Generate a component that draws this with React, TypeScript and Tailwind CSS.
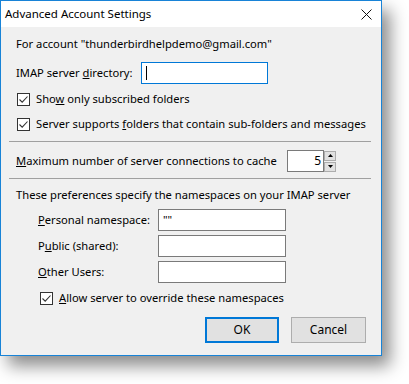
import React from "react";

const font = { fontFamily: '"Noto Sans", "Open Sans", sans-serif' };

function Check({ className = "" }: { className?: string }) {
  return (
    <span className={`flex h-[13px] w-[13px] shrink-0 items-center justify-center border border-[#333] bg-white ${className}`}>
      <svg width="11" height="11" viewBox="0 0 11 11">
        <path d="M1.5 5.5 L4.2 8.2 L9.5 2.5" fill="none" stroke="#333" strokeWidth="1.1" />
      </svg>
    </span>
  );
}

function Field({ value = "", className = "" }: { value?: string; className?: string }) {
  return (
    <div className={`flex h-[22px] shrink-0 items-center border border-[#7a7a7a] bg-white px-[4px] ${className}`}>
      <span className="leading-none">{value}</span>
    </div>
  );
}

export default function App() {
  return (
    <div className="h-[384px] w-[409px] overflow-hidden whitespace-nowrap bg-white text-[11.2px] text-black" style={font}>
      <div className="flex h-[356px] w-[382px] flex-col border border-[#1883d7] bg-[#f0f0f0] shadow-[8px_10px_16px_rgba(0,0,0,0.45)]">
        <div className="flex h-[26px] items-center justify-between bg-white pl-[4px] pr-[9px] text-[11.5px]">
          <span>Advanced Account Settings</span>
          <svg width="11" height="11" viewBox="0 0 11 11">
            <path d="M0.5 0.5 L10.5 10.5 M10.5 0.5 L0.5 10.5" stroke="#111" strokeWidth="1" />
          </svg>
        </div>

        <div className="flex flex-col">
          <div className="ml-[15px] mt-[9px] flex h-[16px] items-center">For account "thunderbirdhelpdemo@gmail.com"</div>

          <div className="ml-[15px] mt-[10px] flex h-[22px] items-center">
            <span className="w-[125px] shrink-0">
              IMAP server <u>d</u>irectory:
            </span>
            <div className="flex h-[22px] w-[127px] shrink-0 items-center border border-[#0078d7] bg-white pl-[4px]">
              <span className="h-[14px] w-[1px] bg-black" />
            </div>
          </div>

          <div className="ml-[16px] mt-[7px] flex h-[16px] items-center gap-[6px]">
            <Check />
            <span>
              Sho<u>w</u> only subscribed folders
            </span>
          </div>

          <div className="ml-[16px] mt-[9px] flex h-[16px] items-center gap-[6px]">
            <Check />
            <span>
              Server supports <u>f</u>olders that contain sub-folders and messages
            </span>
          </div>

          <div className="ml-[8px] mt-[9px] h-[1px] w-[362px] bg-[#a0a0a0]" />

          <div className="ml-[15px] mt-[8px] flex h-[22px] items-center">
            <span className="w-[271px] shrink-0">
              <u>M</u>aximum number of server connections to cache
            </span>
            <div className="flex h-[22px] w-[37px] shrink-0 items-center justify-end border border-[#7a7a7a] bg-white pr-[2px] text-[12px]">5</div>
            <div className="flex h-[21px] w-[12px] shrink-0 flex-col gap-[1px]">
              <div className="flex flex-1 items-center justify-center border border-[#adadad] bg-[#e1e1e1]">
                <svg width="5" height="3" viewBox="0 0 5 3"><path d="M2.5 0 L5 3 L0 3 Z" fill="#000" /></svg>
              </div>
              <div className="flex flex-1 items-center justify-center border border-[#adadad] bg-[#e1e1e1]">
                <svg width="5" height="3" viewBox="0 0 5 3"><path d="M0 0 L5 0 L2.5 3 Z" fill="#000" /></svg>
              </div>
            </div>
          </div>

          <div className="ml-[8px] mt-[6px] h-[1px] w-[362px] bg-[#a0a0a0]" />

          <div className="ml-[15px] mt-[8px] flex h-[16px] items-center">These preferences specify the namespaces on your IMAP server</div>

          <div className="ml-[37px] mt-[6px] flex h-[22px] items-center">
            <span className="w-[120px] shrink-0">
              <u>P</u>ersonal namespace:
            </span>
            <Field value={'""'} className="w-[128px]" />
          </div>
          <div className="ml-[37px] mt-[4px] flex h-[22px] items-center">
            <span className="w-[120px] shrink-0">
              P<u>u</u>blic (shared):
            </span>
            <Field className="w-[128px]" />
          </div>
          <div className="ml-[37px] mt-[4px] flex h-[22px] items-center">
            <span className="w-[120px] shrink-0">
              <u>O</u>ther Users:
            </span>
            <Field className="w-[128px]" />
          </div>

          <div className="ml-[39px] mt-[7px] flex h-[16px] items-center gap-[6px]">
            <Check />
            <span>
              <u>A</u>llow server to override these namespaces
            </span>
          </div>

          <div className="mt-[11px] flex justify-end gap-[12px] pr-[15px] text-[12px]">
            <button className="flex h-[26px] w-[74px] items-center justify-center border-2 border-[#0078d7] bg-[#e1e1e1]">OK</button>
            <button className="flex h-[26px] w-[75px] items-center justify-center border border-[#adadad] bg-[#e1e1e1]">Cancel</button>
          </div>
        </div>
      </div>
    </div>
  );
}
